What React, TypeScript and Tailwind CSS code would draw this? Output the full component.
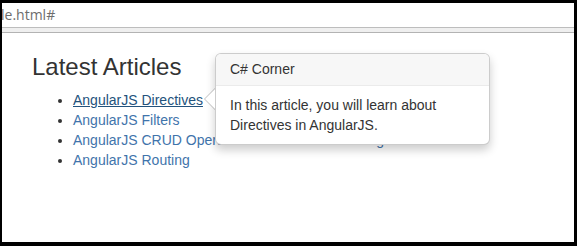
import React from "react";

const ARTICLES = [
  "AngularJS Directives",
  "AngularJS Filters",
  "AngularJS CRUD Operations With Web API Using",
  "AngularJS Routing",
];

export default function App() {
  return (
    <div className="h-[246px] w-[577px] bg-black pb-[4px] pl-[2px] pr-[3px] pt-[3px] font-['Liberation_Sans',Arial,sans-serif]">
      <div className="flex h-full flex-col overflow-hidden bg-white">
        {/* address bar strip */}
        <div className="flex h-[25px] shrink-0 items-center overflow-hidden border-b border-[#bdbdbd] bg-white">
          <span className="-ml-[1px] -mt-[1px] font-['Open_Sans',sans-serif] text-[14px] leading-none text-[#6d6d6d]">le.html#</span>
        </div>
        <div className="h-[4px] shrink-0 bg-[#efefef]" />
        <div className="h-[1px] shrink-0 bg-[#b3b3b3]" />

        {/* page */}
        <div className="relative flex-1 pl-[30px] text-[14px] leading-[20px] text-[#333]">
          <h3 className="mb-[10px] mt-[21px] text-[24px] font-normal leading-[1.1]">Latest Articles</h3>
          <ul className="list-disc pl-[41px]">
            {ARTICLES.map((a, i) => (
              <li key={a}>
                <a href="#" className={i === 0 ? "text-[#23527c] underline" : "text-[#3f74ab]"}>
                  {a}
                </a>
              </li>
            ))}
          </ul>

          {/* popover */}
          <div className="absolute left-[213px] top-[20px] w-[275px] rounded-[6px] border border-[rgba(0,0,0,0.2)] bg-white shadow-[0_5px_10px_rgba(0,0,0,0.2)]">
            <span className="absolute -left-[12px] top-1/2 -mt-[11px] h-0 w-0 border-y-[11px] border-r-[11px] border-l-0 border-y-transparent border-r-[rgba(0,0,0,0.25)]" />
            <span className="absolute -left-[11px] top-1/2 -mt-[10px] h-0 w-0 border-y-[10px] border-r-[10px] border-l-0 border-y-transparent border-r-white" />
            <h3 className="rounded-t-[5px] border-b border-[#ebebeb] bg-[#f7f7f7] px-[14px] py-[8px] text-[14px] font-normal leading-[1.1]">
              C# Corner
            </h3>
            <div className="px-[14px] py-[9px]">
              In this article, you will learn about Directives in AngularJS.
            </div>
          </div>
        </div>
      </div>
    </div>
  );
}
